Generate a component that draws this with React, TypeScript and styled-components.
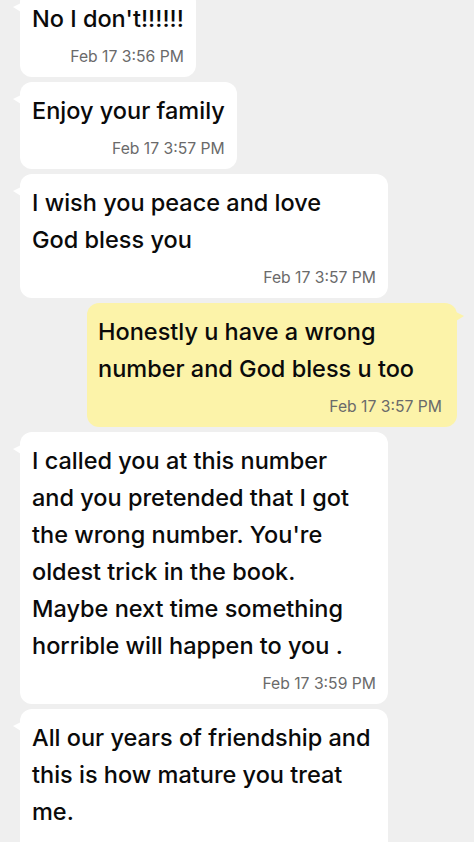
import React from "react";
import styled, { createGlobalStyle, css } from "styled-components";

const GlobalStyle = createGlobalStyle`
  html, body {
    margin: 0;
    padding: 0;
    background: #efefef;
    overflow: hidden;
  }
  body {
    font-family: Inter, "Liberation Sans", Arial, sans-serif;
    -webkit-font-smoothing: antialiased;
  }
`;

const Screen = styled.div`
  width: 474px;
  height: 842px;
  overflow: hidden;
  background: #efefef;
`;

const Thread = styled.div`
  display: flex;
  flex-direction: column;
  gap: 5px;
  margin-top: -10px;
  padding: 0 17px 0 20px;
`;

const Bubble = styled.div<{ $mine?: boolean; $wide?: boolean; $cut?: boolean }>`
  position: relative;
  align-self: flex-start;
  width: ${(p) => (p.$wide ? "368px" : "auto")};
  box-sizing: border-box;
  padding: 10px 12px ${(p) => (p.$cut ? "40px" : "10px")} 12px;
  border-radius: 12px;
  background: #ffffff;

  &::before {
    content: "";
    position: absolute;
    top: 13px;
    left: -7px;
    width: 0;
    height: 0;
    border-top: 4px solid transparent;
    border-bottom: 5px solid transparent;
    border-right: 8px solid #ffffff;
  }

  ${(p) =>
    p.$mine &&
    css`
      align-self: flex-end;
      width: ${p.$wide ? "370px" : "auto"};
      padding: 10px 15px 10px 11px;
      background: #fcf3a9;

      &::before {
        left: auto;
        right: -7px;
        top: 9px;
        border-right: 0;
        border-left: 8px solid #fcf3a9;
      }
    `}
`;

const Line = styled.div`
  font-size: 23.5px;
  font-weight: 500;
  line-height: 37px;
  color: #0a0a0a;
  white-space: nowrap;
`;

const Stamp = styled.div`
  margin-top: 10px;
  font-size: 15.7px;
  line-height: 20px;
  color: #6a6a6a;
  text-align: right;
  white-space: nowrap;
`;

type Message = {
  lines: string[];
  time?: string;
  mine?: boolean;
};

// the last message runs past the bottom of the screen, its time is not shown
const messages: Message[] = [
  { lines: ["No I don't!!!!!!"], time: "Feb 17 3:56 PM" },
  { lines: ["Enjoy your family"], time: "Feb 17 3:57 PM" },
  { lines: ["I wish you peace and love", "God bless you"], time: "Feb 17 3:57 PM" },
  {
    lines: ["Honestly u have a wrong", "number and God bless u too"],
    time: "Feb 17 3:57 PM",
    mine: true,
  },
  {
    lines: [
      "I called you at this number",
      "and you pretended that I got",
      "the wrong number. You're",
      "oldest trick in the book.",
      "Maybe next time something",
      "horrible will happen to you .",
    ],
    time: "Feb 17 3:59 PM",
  },
  {
    lines: ["All our years of friendship and", "this is how mature you treat", "me."],
  },
];

export default function App() {
  return (
    <Screen>
      <GlobalStyle />
      <Thread>
        {messages.map((m, i) => (
          <Bubble key={i} $mine={m.mine} $wide={m.lines.length > 1} $cut={!m.time}>
            {m.lines.map((l, j) => (
              <Line key={j}>{l}</Line>
            ))}
            {m.time && <Stamp>{m.time}</Stamp>}
          </Bubble>
        ))}
      </Thread>
    </Screen>
  );
}
